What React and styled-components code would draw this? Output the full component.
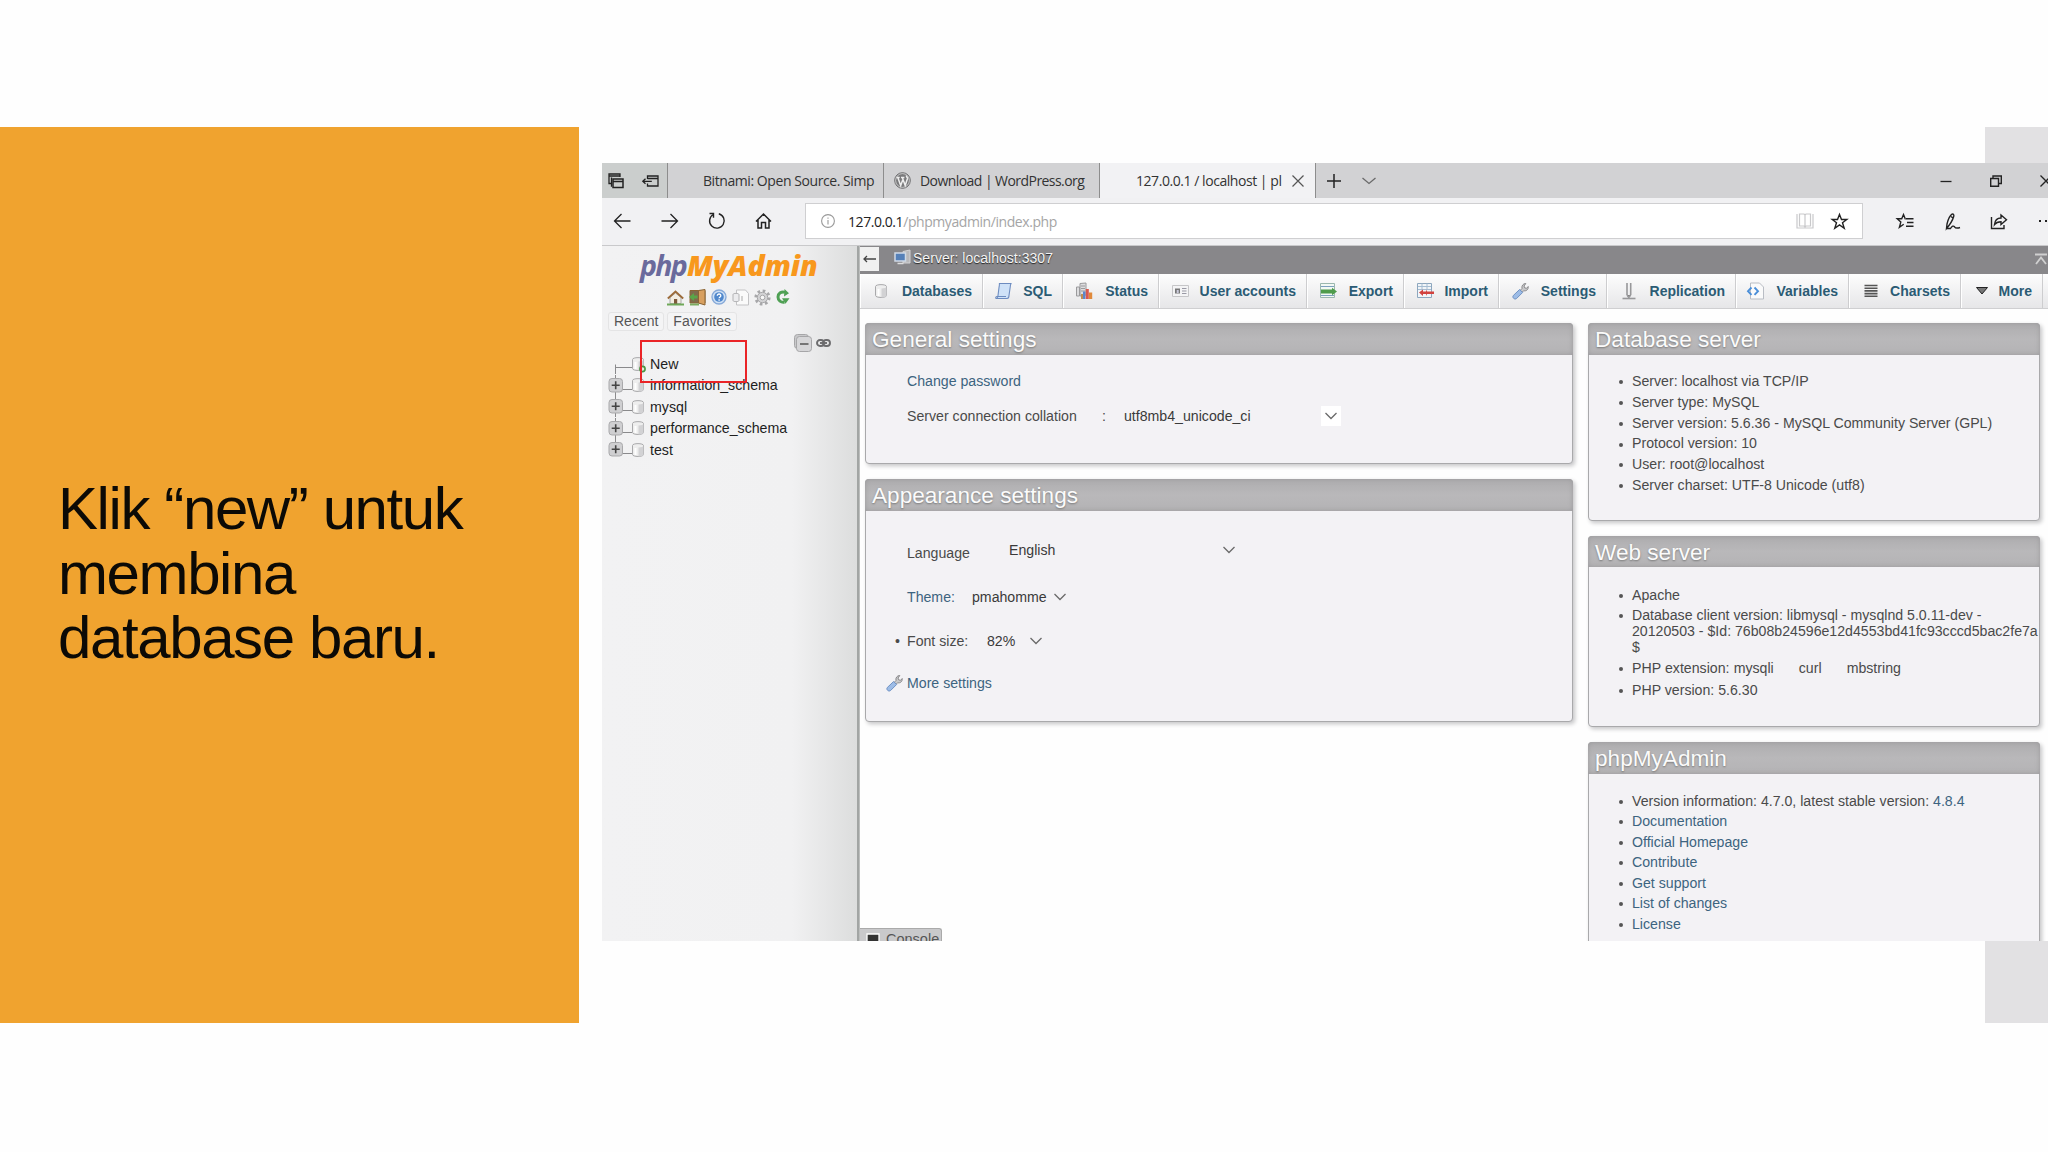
import React from 'react'
import styled, { createGlobalStyle, css } from 'styled-components'

const GlobalStyle = createGlobalStyle`
    * {
        box-sizing: border-box;
    }
    body {
        margin: 0;
        background: #fefefe;
        font-family: "Liberation Sans", Arial, sans-serif;
    }
    svg {
        display: block;
        flex: none;
        overflow: visible;
    }
`

/* ---------- slide ---------- */

const Slide = styled.div`
    width: 2048px;
    height: 1152px;
    padding-top: 127px;
    overflow: hidden;
`

const Stage = styled.div`
    display: flex;
    height: 896px;
    background: linear-gradient(to right, transparent 1985px, #e2e1e3 1985px);
`

const Caption = styled.div`
    flex: none;
    width: 579px;
    padding: 350px 0 0 58px;
    background: #f0a32f;
`

const Title = styled.h1`
    margin: 0;
    font-size: 60px;
    font-weight: 400;
    line-height: 64.7px;
    letter-spacing: -1.4px;
    color: #0c0a06;
    white-space: pre-line;
`

/* ---------- browser window ---------- */

const Browser = styled.div`
    flex: none;
    display: flex;
    flex-direction: column;
    width: 1446px;
    height: 778px;
    margin: 36px 0 0 23px;
    background: #fff;
    overflow: hidden;
`

const TabStrip = styled.div`
    display: flex;
    height: 35px;
    background: #d2d2d4;
    font-family: "Open Sans", "Noto Sans", sans-serif;
    font-size: 14px;
    color: #333;
`

const TabTools = styled.div`
    display: flex;
    align-items: center;
    gap: 18px;
    width: 66px;
    padding-left: 6px;
    background: #cbcecd;
    border-right: 1px solid #8d8d8d;
`

const Tab = styled.div`
    display: flex;
    align-items: center;
    width: ${p => p.$w}px;
    padding-left: ${p => p.$pad}px;
    background: ${p => (p.$active ? '#f2f2f4' : 'transparent')};
    border-right: 1px solid #8d8d8d;
    white-space: nowrap;

    svg {
        margin-left: ${p => (p.$active ? 11 : 0)}px;
        margin-right: ${p => (p.$active ? 0 : 9)}px;
    }
`

const TabText = styled.span`
    letter-spacing: ${p => p.$ls}px;
`

const StripIcons = styled.div`
    display: flex;
    flex: 1;
    align-items: center;
    padding-left: 11px;
    gap: 21px;
`

const WindowButtons = styled.div`
    display: flex;
    align-items: center;
    gap: 38px;
    margin-left: auto;
    margin-right: -4px;
`

const Toolbar = styled.div`
    display: flex;
    align-items: center;
    height: 48px;
    padding: 0 0 1px 11px;
    background: #f1f1f3;
    border-bottom: 1px solid #c9c9cb;
`

const NavButtons = styled.div`
    display: flex;
    flex: none;
    gap: 27px;
    width: 192px;
`

const AddressBar = styled.div`
    display: flex;
    align-items: center;
    flex: none;
    width: 1058px;
    height: 36px;
    padding: 0 14px 0 15px;
    background: #fff;
    border: 1px solid #cfcfd1;
    font-family: "Open Sans", "Noto Sans", sans-serif;
    font-size: 14px;
    letter-spacing: -0.43px;
    color: #a5a5a5;

    b {
        font-weight: 400;
        color: #222;
    }
    span {
        flex: 1;
        margin-left: 13px;
    }
    svg + svg {
        margin-left: 17px;
    }
`

const ToolbarRight = styled.div`
    display: flex;
    align-items: center;
    flex: none;
    gap: 29px;
    margin-left: 33px;
`

/* ---------- phpMyAdmin ---------- */

const Body = styled.div`
    display: flex;
    flex: 1;
    min-height: 0;
`

const Sidebar = styled.div`
    position: relative;
    flex: none;
    width: 255px;
    padding-top: 5px;
    background: linear-gradient(to right, #f2f2f3 0, #f1f1f2 190px, #dcdddd 255px);
`

const Splitter = styled.div`
    flex: none;
    width: 3px;
    background: linear-gradient(to right, #a2a5a4 2px, #bcbebd 2px);
`

const Logo = styled.div`
    height: 34px;
    padding-left: 38px;
    font-family: "Open Sans", sans-serif;
    font-style: italic;
    font-weight: 800;
    font-size: 28.5px;
    line-height: 28px;
    letter-spacing: -0.1px;
    color: #f8981d;

    span {
        font-weight: 700;
        letter-spacing: -1.7px;
        margin-right: 1px;
        color: #6a6a9c;
    }
`

const IconRow = styled.div`
    display: flex;
    align-items: center;
    gap: 5px;
    height: 24px;
    padding-left: 65px;
`

const RecentRow = styled.div`
    display: flex;
    gap: 3px;
    height: 20px;
    margin-top: 3px;
    padding-left: 6px;
`

const RecentButton = styled.div`
    height: 19px;
    padding: 0 5px;
    border: 1px solid #e4e4e5;
    border-radius: 3px;
    background: #f4f4f5;
    font-size: 14px;
    line-height: 17px;
    color: #555;
`

const TreeTools = styled.div`
    display: flex;
    align-items: center;
    gap: 4px;
    margin: 1px 0 0 192px;
    height: 20px;
`

const Tree = styled.div`
    padding: 0 0 0 6px;
`

const TreeRow = styled.div`
    display: flex;
    align-items: center;
    height: 21.5px;
    font-size: 14.2px;
    color: #1e1e1e;

    svg + svg {
        margin-right: 5px;
    }
`

const Highlight = styled.div`
    position: absolute;
    left: 38px;
    top: 94px;
    width: 107px;
    height: 43px;
    border: 2px solid #ea2427;
`

const Main = styled.div`
    display: flex;
    flex-direction: column;
    flex: 1;
    min-width: 0;
    background: #fefefe;
`

const ServerBar = styled.div`
    display: flex;
    align-items: flex-start;
    height: 28px;
    background: #88878a;
    padding-top: 1px;
    font-size: 14px;
    line-height: 22px;
    color: #f4f4f4;
    text-shadow: 0 1px 1px #222;

    span {
        flex: 1;
        margin-left: 1px;
        letter-spacing: 0.03px;
    }
`

const BackArrow = styled.div`
    display: flex;
    align-items: center;
    justify-content: center;
    width: 19px;
    height: 24px;
    margin-right: 15px;
    background: #f0f0f0;
`

const Menu = styled.div`
    display: flex;
    height: 35px;
    border-bottom: 1px solid #cfcfd1;
    background: linear-gradient(#fdfdfd, #e6e6e8);
`

const MenuTab = styled.div`
    display: flex;
    align-items: center;
    justify-content: space-between;
    flex: none;
    width: ${p => p.$w}px;
    padding: 0 10px 1px ${p => p.$pad || 13}px;
    border-right: 1px solid #cdcdcf;
    box-shadow: inset 1px 0 #fff;
    font-size: 14px;
    font-weight: 700;
    color: #2b5b74;
    white-space: nowrap;
`

const Columns = styled.div`
    display: flex;
    gap: 15px;
    flex: 1;
    min-height: 0;
    padding: 14px 0 0 5px;
`

const Column = styled.div`
    display: flex;
    flex-direction: column;
    gap: 15px;
    flex: none;
    width: ${p => p.$w}px;
`

const Group = styled.div`
    flex: none;
    height: ${p => p.$h}px;
    border: 1px solid #a9a9ab;
    border-radius: 4px;
    background: #f3f2f5;
    box-shadow: 2px 2px 4px #c4c4c6;
    font-size: 14.15px;
    color: #4a4a4a;
`

const GroupTitle = styled.h2`
    height: ${p => p.$h || 32}px;
    margin: -1px -1px 0;
    padding-left: 7px;
    border-radius: 4px 4px 0 0;
    background: linear-gradient(#aeadaf, #b9b8ba 50%, #b4b3b5);
    box-shadow: inset 0 0 5px #9a999b;
    font-size: 22.6px;
    font-weight: 400;
    line-height: 33px;
    color: #fbfbfb;
    text-shadow: 0 1px 2px #777;
`

const Row = styled.div`
    display: flex;
    align-items: center;
    height: ${p => p.$h}px;
    padding-left: ${p => p.$pad || 41}px;
    white-space: nowrap;
`

const Cell = styled.span`
    flex: none;
    width: ${p => p.$w}px;
    ${p => p.$up && css`
        padding-bottom: ${p.$up}px;
    `}
`

const Arrow = styled.span`
    display: flex;
    align-items: center;
    justify-content: center;
    width: 20px;
    height: 20px;
    background: ${p => (p.$white ? '#fff' : 'transparent')};
    ${p => p.$up && css`
        margin-bottom: ${p.$up}px;
    `}
`

const Link = styled.a`
    color: #3d6480;
`

const Dark = styled.span`
    color: #3a3a3a;
`

const List = styled.ul`
    margin: 0;
    padding: ${p => p.$top}px 0 0 30px;
    list-style: none;
`

const Item = styled.li`
    display: flex;
    height: ${p => p.$h || 20.5}px;
    line-height: ${p => p.$lh || 20.5}px;
    word-spacing: ${p => p.$ws || 0}px;
    white-space: pre;

    &::before {
        content: '';
        flex: none;
        width: 4px;
        height: 4px;
        margin: ${p => (p.$lh || 20.5) / 2 - 1}px 9px 0 0;
        border-radius: 2px;
        background: #555;
    }
`

const Console = styled.div`
    display: flex;
    align-items: flex-start;
    gap: 6px;
    flex: none;
    width: 82px;
    height: 13px;
    padding: 3px 0 0 6px;
    overflow: hidden;
    border: solid #aaa;
    border-width: 1px 1px 0 0;
    border-radius: 0 3px 0 0;
    background: #c9c9cb;
    font-size: 14.5px;
    line-height: 15px;
    color: #555;

    svg {
        margin-top: 1px;
    }
`

/* ---------- icons ---------- */

const Svg = ({ w = 16, h = 16, sw = 1.3, c = '#222', children }) => (
    <svg width={w} height={h} viewBox={`0 0 ${w} ${h}`} fill="none" stroke={c} strokeWidth={sw}>
        {children}
    </svg>
)

const Chevron = ({ c = '#6a6a6a', w = 12 }) => (
    <Svg w={w} h={8} c={c} sw={1.3}><path d={`M.5 1l${w / 2 - 0.5} 5.5L${w - 0.5} 1`} /></Svg>
)

const DbIcon = ({ add }) => (
    <Svg w={14} h={16} c="#a9a9ab" sw={1}>
        <path d="M1.5 3.5C1.5 1 12.5 1 12.5 3.5v9c0 2.6-11 2.6-11 0z" fill="#eee" />
        <path d="M7.500 5.500c3 0 5-1 5-2v9c0 1-2 2-5 2z" fill="#d2d2d4" stroke="none" />
        <path d="M4.500 6v7" stroke="#fff" strokeWidth="2" />
        {add && <circle cx="11.5" cy="13" r="2.6" stroke="#4b9443" strokeWidth="1.6" fill="#dfeedd" />}
    </Svg>
)

const Wrench = () => (
    <Svg w={18} h={18} sw={1}>
        <path d="M9 8.5l2-2c-.6-2.6 1-5 3.8-5L13 4l.6 1.8 2 .5 1.6-1.8c.4 3-2 4.900-4.500 4.200l-2 2z" fill="#c9c9cb" stroke="#8a8a8c" />
        <path d="M8.600 7.500l3 3-6 6c-2 1.600-4.800-1-3.300-3z" fill="#9dbce6" stroke="#6f92c4" />
    </Svg>
)

const SqlIcon = () => (
    <Svg w={18} h={18} c="#6d8cc0" sw={1.1}>
        <path d="M4 1.500h12.500c-1.500.5-1 2-1.200 3l-1.300 9c0 1.500-.5 3-2 3H1c1.500 0 1.800-1.500 2-3l1-8C4.200 3.500 5 2 4 1.500z" fill="#cfe2f8" />
        <path d="M1 16.500c-.8-.8 0-2 1-2h9" />
    </Svg>
)

const StatusIcon = () => (
    <Svg w={18} h={18} c="#9a9a9c" sw={1}>
        <path d="M5 1.500l6-.5v12l-6 1zM1.500 5h3v9h-3z" fill="#dddddf" />
        <path d="M6 4h4M6 6.500h4M6 9h4" />
        <path d="M8 9.500h2.500V17H8z" fill="#5c86cc" stroke="none" />
        <path d="M10.800 7h3v10h-3z" fill="#d9584f" stroke="none" />
        <path d="M14 10.500h3.200V17H14z" fill="#e08a3c" stroke="none" />
        <path d="M6 12h2v5H6z" fill="#c08f54" stroke="none" />
    </Svg>
)

const UserIcon = () => (
    <Svg w={17} h={14} c="#c6c6c8" sw={1}>
        <path d="M.5 1.500h16v11H.5z" fill="#f4f4f5" />
        <path d="M3 4.500h5v5H3z" fill="#777" stroke="none" />
        <path d="M4.700 6h2v3h-2z" fill="#ccd" stroke="none" />
        <path d="M10 4.500h4.500M10 7h4.500M10 9.500h4.500" stroke="#9a9aa5" />
    </Svg>
)

const ExportIcon = () => (
    <Svg w={17} h={17} c="#9bb7ae" sw={1}>
        <path d="M.5 1.500h14v14H.5z" fill="#f2f8f4" />
        <path d="M1 4.500h13M1 13.500h13" stroke="#7d9fbe" />
        <path d="M1 7.500h11V5.800l5 3.700-5 3.700v-1.700H1z" fill="#4f9c4c" stroke="none" />
    </Svg>
)

const ImportIcon = () => (
    <Svg w={17} h={17} c="#8da7be" sw={1}>
        <path d="M.5 1.500h14v14H.5z" fill="#f2f5f8" />
        <path d="M1 4.500h13M1 7.500h13M5 1.500v6M10 1.500v6" stroke="#a6bdd2" />
        <path d="M2 10.500l4-3v2h3v-2l1 2h7v2.500h-7l-1 2v-2H6v2z" fill="#d2423e" stroke="none" />
    </Svg>
)

const ReplicationIcon = () => (
    <Svg w={14} h={18} c="#98989a" sw={1.6}>
        <path d="M5 1v12M8.700 1v12" />
        <path d="M.5 16.500h13" />
        <path d="M5 13l1.800 2.500L8.700 13" fill="#777" />
    </Svg>
)

const VariablesIcon = () => (
    <Svg w={18} h={18} c="#b9bdc4" sw={1}>
        <path d="M3.500 1h9l4 4v12h-13z" fill="#fafafa" />
        <path d="M4.500 5.500L1 9.200l3.500 3.700M7.500 5.500L11 9.200l-3.500 3.700" stroke="#4a8ed8" strokeWidth="1.900" />
    </Svg>
)

const CharsetsIcon = () => (
    <Svg w={14} h={14} c="#555" sw={1.6}>
        <path d="M.5 1.500h13M.5 4.200h13M.5 6.900h13M.5 9.600h13M.5 12.300h13" />
    </Svg>
)

const MoreIcon = () => (
    <Svg w={12} h={9} c="#222" sw={1}><path d="M.5 1.500h11L6 8z" fill="#777" /></Svg>
)

const HomeColor = () => (
    <Svg w={17} h={17} c="#9c6b3a" sw={1.800}>
        <path d="M3 8.500v6h11v-6L8.500 4z" fill="#f3ede2" stroke="#aaa" strokeWidth="1" />
        <path d="M.8 9.500L8.500 2.500l7.700 7" />
        <path d="M7 10h3.200v5H7z" fill="#7d5a3c" stroke="none" />
        <path d="M0 15.500h17" stroke="#6fa858" strokeWidth="2" />
    </Svg>
)

const ExitIcon = () => (
    <Svg w={17} h={17} c="#8a6434" sw={1}>
        <path d="M1 1.500h15v12.500H1z" fill="#7f6b4c" />
        <path d="M9.500 1.500L16 .5v15.500l-6.500-2z" fill="#d8a060" />
        <path d="M8.500 6.500H5V4L0 8l5 4V9.500h3.500z" fill="#5aa548" stroke="none" />
        <path d="M1 15.500h9" stroke="#7cac60" strokeWidth="2" />
    </Svg>
)

const HelpIcon = () => (
    <Svg w={16} h={16} c="#86a9d8" sw={1.300}>
        <circle cx="8" cy="8" r="7" fill="#cfe0f4" />
        <circle cx="8" cy="8" r="4.800" fill="#4f87cc" stroke="none" />
        <path d="M6.300 6.700c0-2.300 3.600-2.200 3.500 0 0 1.300-1.700 1.200-1.700 2.600M8.100 10.300v1.400" stroke="#fff" />
    </Svg>
)

const DocIcon = () => (
    <Svg w={17} h={17} c="#c3c3c5" sw={1}>
        <path d="M4.500 1h9l3 3.500V16h-12z" fill="#fafafa" />
        <path d="M1 5.500c0-1.500 6-1.500 6 0v6c0 1.500-6 1.500-6 0z" fill="#ececee" stroke="#b2b2b4" />
        <path d="M10 7v5" stroke="#aaa" />
    </Svg>
)

const GearIcon = () => (
    <Svg w={17} h={17} c="#a7a7a9" sw={1}>
        <circle cx="8.500" cy="8.500" r="6.600" strokeWidth="3" strokeDasharray="2.600 2.580" />
        <circle cx="8.500" cy="8.500" r="5.200" fill="#d2d2d4" />
        <circle cx="8.500" cy="8.500" r="2.300" fill="#f6f6f6" />
    </Svg>
)

const ReloadIcon = () => (
    <Svg w={14} h={16} c="#4fa054" sw={3}>
        <path d="M8.500 13.200C5 13.800 2 11.500 2 8s3.500-6 7-4.700" />
        <path d="M8.500 0L13 4.200 8 7.500zM6 9.200h7.500l-4 5.500z" fill="#4fa054" stroke="none" />
    </Svg>
)

const CollapseIcon = () => (
    <Svg w={18} h={18} c="#a6a6a8" sw={1}>
        <rect x=".5" y=".5" width="14" height="14" rx="3" fill="#c9c9cb" />
        <rect x="2.500" y="2.500" width="15" height="15" rx="3" fill="#d6d6d8" />
        <path d="M6 10h8.500" stroke="#555" strokeWidth="1.500" />
    </Svg>
)

const ChainIcon = () => (
    <Svg w={15} h={8} c="#6c6c6e" sw={1.900}>
        <rect x="1" y="1" width="7" height="6" rx="3" />
        <rect x="7" y="1" width="7" height="6" rx="3" />
        <path d="M4 4h7" />
    </Svg>
)

const Branch = ({ first, last }) => (
    <Svg w={23} h={21} c="#8a8a8c" sw={1}>
        {first && <path d="M7.500 21V11.500M7.500 14.500H24" />}
        {!first && (
            <>
                <path d={last ? 'M7.500 0v4' : 'M7.500 0v21'} />
                <path d="M14 14.500h10" />
                <rect x="1" y="3.500" width="13.500" height="13.500" rx="3" fill="#cfcfd1" stroke="#a9a9ab" />
                <path d="M3.700 10.200h8M7.700 6.200v8" stroke="#444" strokeWidth="1.600" />
            </>
        )}
    </Svg>
)

const WordPressIcon = () => (
    <svg width="17" height="17" viewBox="0 0 17 17" fill="none" stroke="#6d6d6f">
        <circle cx="8.500" cy="8.500" r="7.800" fill="#7a7a7c" strokeWidth="1" />
        <circle cx="8.500" cy="8.500" r="6.900" stroke="#e8e8e8" strokeWidth=".7" />
        <path d="M2.500 5.500h3.200M7 5.500h3.400M3.800 5.500l2.900 8 2-5.500M8.300 5.500l2.900 8 2.300-7c.2-1-1.500-1.800-1-3" stroke="#eee" strokeWidth="1.500" />
    </svg>
)

const MENU = [
    { label: 'Databases', w: 123, pad: 14, icon: <DbIcon /> },
    { label: 'SQL', w: 80, pad: 12, icon: <SqlIcon /> },
    { label: 'Status', w: 96, pad: 12, icon: <StatusIcon /> },
    { label: 'User accounts', w: 148, icon: <UserIcon /> },
    { label: 'Export', w: 97, icon: <ExportIcon /> },
    { label: 'Import', w: 95, icon: <ImportIcon /> },
    { label: 'Settings', w: 108, pad: 12, icon: <Wrench /> },
    { label: 'Replication', w: 129, pad: 15, icon: <ReplicationIcon /> },
    { label: 'Variables', w: 113, pad: 11, icon: <VariablesIcon /> },
    { label: 'Charsets', w: 112, pad: 15, icon: <CharsetsIcon /> },
    { label: 'More', w: 82, pad: 15, icon: <MoreIcon /> },
]

const DATABASES = ['information_schema', 'mysql', 'performance_schema', 'test']

const SERVER_INFO = [
    'Server: localhost via TCP/IP',
    'Server type: MySQL',
    'Server version: 5.6.36 - MySQL Community Server (GPL)',
    'Protocol version: 10',
    'User: root@localhost',
    'Server charset: UTF-8 Unicode (utf8)',
]

const LINKS = ['Documentation', 'Official Homepage', 'Contribute', 'Get support', 'List of changes', 'License']

function BrowserChrome() {
    return (
        <>
            <TabStrip>
                <TabTools>
                    <Svg w={16} h={16}>
                        <path d="M3.500 10.500H1V1h11v3M1 3h11M4 13H3.500V4.500" />
                        <path d="M5 6h10v8.500H5zM5 8.500h10" strokeWidth="1.500" />
                    </Svg>
                    <Svg w={17} h={12}>
                        <path d="M5.500 4V1H16v10H5.500V8.500M5.500 3.500H16M.8 6.300h9M3.500 3.800L.8 6.300l2.700 2.500" />
                    </Svg>
                </TabTools>
                <Tab $w={216} $pad={35}>
                    <TabText $ls={-0.43}>Bitnami: Open Source. Simp</TabText>
                </Tab>
                <Tab $w={216} $pad={10}>
                    <WordPressIcon />
                    <TabText $ls={-0.56}>Download | WordPress.org</TabText>
                </Tab>
                <Tab $w={216} $pad={36} $active>
                    <TabText $ls={-0.45}>127.0.0.1 / localhost | pl</TabText>
                    <Svg w={12} h={12} c="#555" sw={1.200}><path d="M.5.5l11 11M11.500.5l-11 11" /></Svg>
                </Tab>
                <StripIcons>
                    <Svg w={14} h={14} sw={1.500}><path d="M7 0v14M0 7h14" /></Svg>
                    <Chevron w={14} />
                    <WindowButtons>
                        <Svg w={12} h={12} sw={1.300}><path d="M.5 6.500h11" /></Svg>
                        <Svg w={12} h={12} sw={1.400}><path d="M.7 3.500h7.800v7.800H.7zM3 3.500V1h8.300v7.500H8.500" /></Svg>
                        <Svg w={12} h={12} sw={1.300}><path d="M.5.5l11 11M11.500.5l-11 11" /></Svg>
                    </WindowButtons>
                </StripIcons>
            </TabStrip>
            <Toolbar>
                <NavButtons>
                    <Svg w={20} h={18}><path d="M17.500 9h-16M8.500 2L1.500 9l7 7" /></Svg>
                    <Svg w={20} h={18}><path d="M1.500 9h16M10.500 2l7 7-7 7" /></Svg>
                    <Svg w={20} h={18} sw={1.400}>
                        <path d="M11.800 1.800a7.300 7.300 0 1 1-5.500.7" />
                        <path d="M2.500 1.500h4v4.200" />
                    </Svg>
                    <Svg w={20} h={18} sw={1.500}>
                        <path d="M2 9.500L9.500 2l7.500 7.500M4 8v8h3.500v-5.500h4V16H15V8" />
                    </Svg>
                </NavButtons>
                <AddressBar>
                    <Svg w={14} h={14} c="#999" sw={1.100}>
                        <circle cx="7" cy="7" r="6.400" />
                        <path d="M7 6v4.500M7 3.500v1.300" />
                    </Svg>
                    <span><b>127.0.0.1</b>/phpmyadmin/index.php</span>
                    <Svg w={18} h={16} c="#c9c9cb" sw={1.200}>
                        <path d="M1 1v14h16V1M3.500 1H8l1 1 1-1h4.500v12H10l-1 1-1-1H3.500zM9 2v12" />
                    </Svg>
                    <Svg w={17} h={17} sw={1.400}>
                        <path d="M8.500 1.500l2 5h5.300l-4.300 3.300 1.700 5.400-4.700-3.300-4.700 3.300 1.700-5.400L1.200 6.500h5.300z" />
                    </Svg>
                </AddressBar>
                <ToolbarRight>
                    <Svg w={18} h={17} sw={1.400}>
                        <path d="M10 5.800h7.500M11 9.500h6.500M10 13.200h7.500M9.800 5.800h-.6L7.500 1.500 5.700 5.800H1.200l3.600 3.300-1.400 5.100 4.300-3" />
                    </Svg>
                    <Svg w={18} h={17} sw={1.400}>
                        <path d="M3.500 15.500L4 11c1-4 3-8.500 5-9.800 1.500-.6 2.200.8 1.700 2.300C9.700 7 7 11.500 3.500 15.500zM3 15.500h4.500c1.500-2.500 3-3 4-1.700 1 1.500 2.500 1.700 5.500.7M8 3.500l2 1.500" />
                    </Svg>
                    <Svg w={18} h={17} sw={1.400}>
                        <path d="M1.500 4v11.500H14V12M4.500 11.500C5 7 7.500 5 11 5V2l5.500 4.700L11 11.500V8.700c-3 0-5 .8-6.500 2.800z" />
                    </Svg>
                    <Svg w={18} h={4}>
                        <path d="M2 2h2M8 2h2" strokeWidth="2" />
                    </Svg>
                </ToolbarRight>
            </Toolbar>
        </>
    )
}

function Navigation() {
    return (
        <Sidebar>
            <Logo><span>php</span>MyAdmin</Logo>
            <IconRow>
                <HomeColor />
                <ExitIcon />
                <HelpIcon />
                <DocIcon />
                <GearIcon />
                <ReloadIcon />
            </IconRow>
            <RecentRow>
                <RecentButton>Recent</RecentButton>
                <RecentButton>Favorites</RecentButton>
            </RecentRow>
            <TreeTools>
                <CollapseIcon />
                <ChainIcon />
            </TreeTools>
            <Tree>
                <TreeRow>
                    <Branch first />
                    <DbIcon add />
                    New
                </TreeRow>
                {DATABASES.map((name, i) => (
                    <TreeRow key={name}>
                        <Branch last={i === DATABASES.length - 1} />
                        <DbIcon />
                        {name}
                    </TreeRow>
                ))}
            </Tree>
            <Highlight />
        </Sidebar>
    )
}

function Settings() {
    return (
        <Column $w={708}>
            <Group $h={141}>
                <GroupTitle>General settings</GroupTitle>
                <Row $h={17} />
                <Row $h={18}><Link>Change password</Link></Row>
                <Row $h={16} />
                <Row $h={20}>
                    <Cell $w={195}>Server connection collation</Cell>
                    <Cell $w={22}>:</Cell>
                    <Cell $w={197}><Dark>utf8mb4_unicode_ci</Dark></Cell>
                    <Arrow $white><Chevron /></Arrow>
                </Row>
            </Group>
            <Group $h={243}>
                <GroupTitle>Appearance settings</GroupTitle>
                <Row $h={31} />
                <Row $h={22}>
                    <Cell $w={102}>Language</Cell>
                    <Cell $w={210} $up={6}><Dark>English</Dark></Cell>
                    <Arrow $up={6}><Chevron /></Arrow>
                </Row>
                <Row $h={22} />
                <Row $h={22}>
                    <Cell $w={65}><Link>Theme:</Link></Cell>
                    <Cell $w={78}><Dark>pmahomme</Dark></Cell>
                    <Arrow><Chevron /></Arrow>
                </Row>
                <Row $h={22} />
                <Row $h={22} $pad={29}>
                    <Cell $w={12}>•</Cell>
                    <Cell $w={80}>Font size:</Cell>
                    <Cell $w={39}><Dark>82%</Dark></Cell>
                    <Arrow><Chevron /></Arrow>
                </Row>
                <Row $h={20} />
                <Row $h={22} $pad={19}>
                    <Wrench />
                    <Row $h={22} $pad={4}><Link>More settings</Link></Row>
                </Row>
            </Group>
        </Column>
    )
}

function ServerInfo() {
    return (
        <Column $w={452}>
            <Group $h={198}>
                <GroupTitle>Database server</GroupTitle>
                <List $top={16}>
                    {SERVER_INFO.map(line => <Item key={line} $h={20.800}>{line}</Item>)}
                </List>
            </Group>
            <Group $h={191}>
                <GroupTitle $h={31}>Web server</GroupTitle>
                <List $top={18}>
                    <Item $h={21.500}>Apache</Item>
                    <Item $h={51} $lh={16}>
                        {'Database client version: libmysql - mysqlnd 5.0.11-dev -\n20120503 - $Id: 76b08b24596e12d4553bd41fc93cccd5bac2fe7a\n$'}
                    </Item>
                    <Item $h={22.500} $ws={0.250}>{'PHP extension: mysqli      curl      mbstring'}</Item>
                    <Item>PHP version: 5.6.30</Item>
                </List>
            </Group>
            <Group $h={240}>
                <GroupTitle>phpMyAdmin</GroupTitle>
                <List $top={16.500}>
                    <Item>Version information: 4.7.0, latest stable version: <Link>4.8.4</Link></Item>
                    {LINKS.map(name => <Item key={name}><Link>{name}</Link></Item>)}
                </List>
            </Group>
        </Column>
    )
}

function App() {
    return (
        <Slide>
            <GlobalStyle />
            <Stage>
                <Caption>
                    <Title>{'Klik “new” untuk\nmembina\ndatabase baru.'}</Title>
                </Caption>
                <Browser>
                    <BrowserChrome />
                    <Body>
                        <Navigation />
                        <Splitter />
                        <Main>
                            <ServerBar>
                                <BackArrow>
                                    <Svg w={13} h={8} c="#444"><path d="M13 4H1M4 1L1 4l3 3" /></Svg>
                                </BackArrow>
                                <Svg w={18} h={20} c="#9fb4cc" sw={1}>
                                    <path d="M9 4.500l7-1.500v13h-7z" fill="#b9b9bb" stroke="#d2d2d4" />
                                    <path d="M1 6h10.500v8H1z" fill="#5580b8" stroke="#cfd9e6" strokeWidth="1.500" />
                                    <path d="M3.500 16.500h6" stroke="#ddd" strokeWidth="1.500" />
                                </Svg>
                                <span>Server: localhost:3307</span>
                                <Svg w={14} h={22} c="#d0d0d0" sw={1.800}>
                                    <path d="M1 7.500h12M2 17l5-6.500 5 6.500" />
                                </Svg>
                            </ServerBar>
                            <Menu>
                                {MENU.map(item => (
                                    <MenuTab key={item.label} $w={item.w} $pad={item.pad}>
                                        {item.icon}
                                        {item.label}
                                    </MenuTab>
                                ))}
                            </Menu>
                            <Columns>
                                <Settings />
                                <ServerInfo />
                            </Columns>
                            <Console>
                                <Svg w={14} h={12} c="#fff">
                                    <path d="M1 1h12v11H1z" fill="#333" />
                                </Svg>
                                Console
                            </Console>
                        </Main>
                    </Body>
                </Browser>
            </Stage>
        </Slide>
    )
}

export default App
